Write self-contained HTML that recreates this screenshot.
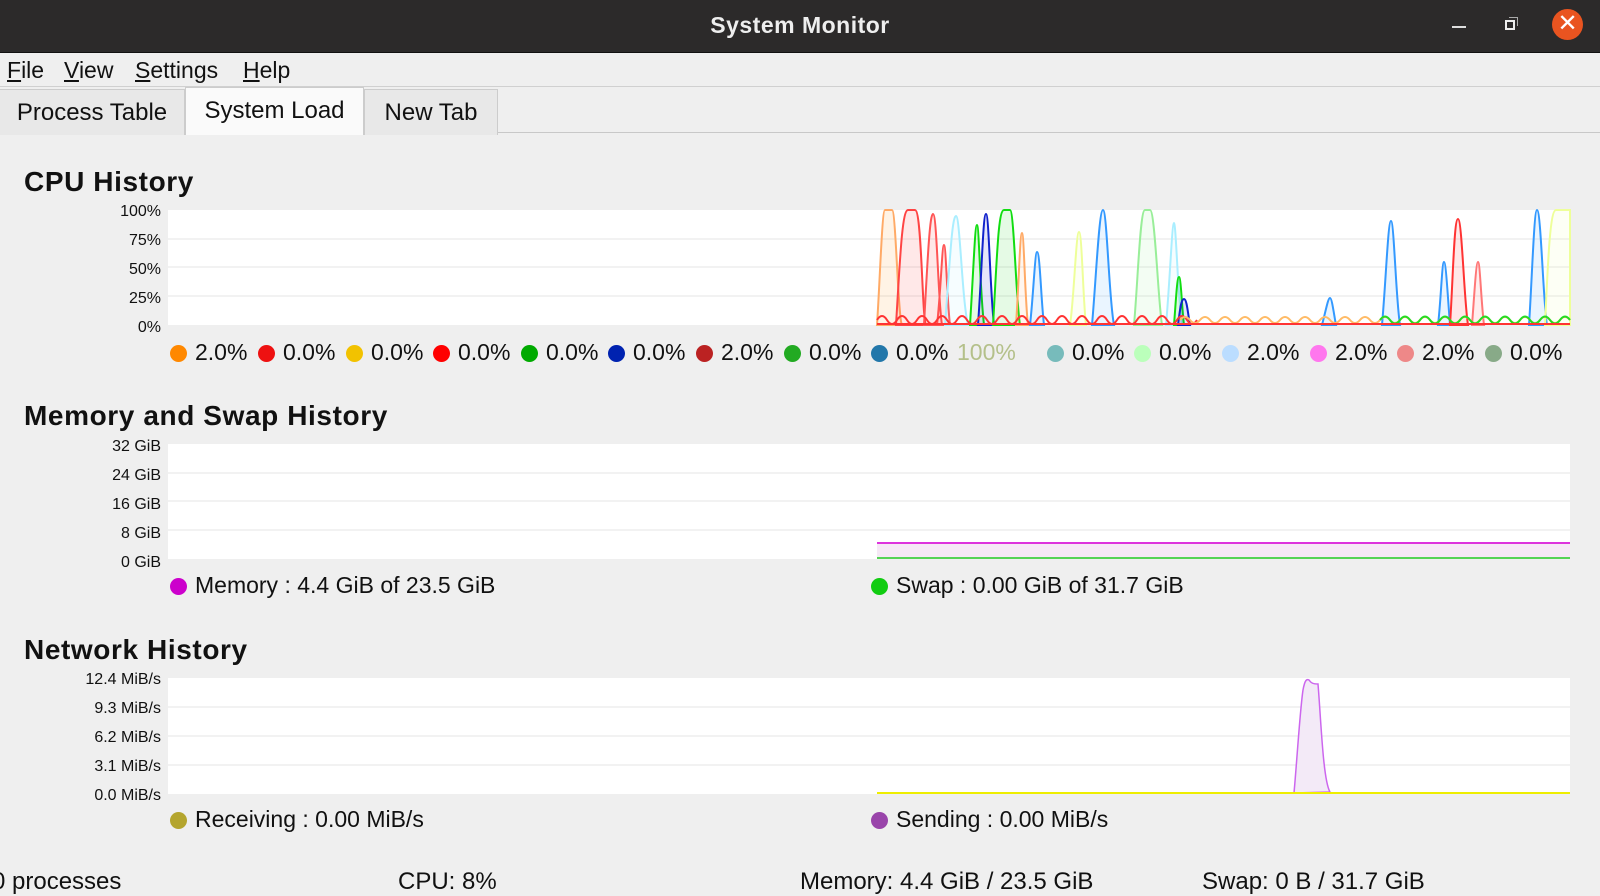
<!DOCTYPE html>
<html><head><meta charset="utf-8"><style>
*{margin:0;padding:0;box-sizing:border-box}
body{width:1600px;height:895px;overflow:hidden;background:#efefef;font-family:"Liberation Sans",sans-serif;color:#111;position:relative}
.a{position:absolute;white-space:nowrap}
#tb{left:0;top:0;width:1600px;height:53px;background:#2c2a2a;border-bottom:1px solid #111}
#title{left:0;width:1600px;top:12px;text-align:center;color:#eee;font-weight:bold;font-size:23px;letter-spacing:0.5px}
.menu{top:57px;font-size:23px}
.menu u{text-decoration:underline}
.tab{top:89px;height:46px;font-size:24px;padding:9px 0 0;text-align:center;border:1px solid #ccc;border-bottom:none;background:#e8e8e8}
h2{position:absolute;font-size:28px;font-weight:bold;left:24px;letter-spacing:0.6px}
.yl{position:absolute;right:1439px;font-size:16px;text-align:right;margin-top:2px}
.lg{position:absolute;font-size:23px}
.dot{position:absolute;width:17px;height:17px;border-radius:50%}
.st{position:absolute;top:868px;font-size:24px}
</style></head><body>
<div id="tb" class="a"></div>
<div id="title" class="a">System Monitor</div>
<div class="a" style="left:1452px;top:26px;width:14px;height:2px;background:#ddd"></div>
<div class="a" style="left:1505px;top:20px;width:10px;height:10px;border:2px solid #eee"></div>
<div class="a" style="left:1509px;top:17px;width:9px;height:9px;border-top:1px solid #aaa;border-right:1px solid #aaa"></div>
<div class="a" style="left:1552px;top:9px;width:31px;height:31px;border-radius:50%;background:#e95420;color:#fff;font-size:24px;text-align:center;line-height:30px">✕</div>
<div class="a menu" style="left:7px"><u>F</u>ile</div>
<div class="a menu" style="left:64px"><u>V</u>iew</div>
<div class="a menu" style="left:135px"><u>S</u>ettings</div>
<div class="a menu" style="left:243px"><u>H</u>elp</div>
<div class="a" style="left:0;top:86px;width:1600px;height:1px;background:#d0d0d0"></div>
<div class="a" style="left:0;top:132px;width:1600px;height:1px;background:#c8c8c8"></div>
<div class="a tab" style="left:0;width:185px;border-left:none">Process Table</div>
<div class="a tab" style="left:185px;width:179px;background:#fafafa;top:87px;height:48px">System Load</div>
<div class="a tab" style="left:364px;width:134px">New Tab</div>

<h2 style="top:166px">CPU History</h2>
<h2 style="top:400px">Memory and Swap History</h2>
<h2 style="top:634px">Network History</h2>

<div class="yl" style="top:201px">100%</div><div class="yl" style="top:230px">75%</div><div class="yl" style="top:259px">50%</div><div class="yl" style="top:288px">25%</div><div class="yl" style="top:317px">0%</div>
<div class="yl" style="top:436px">32 GiB</div><div class="yl" style="top:465px">24 GiB</div><div class="yl" style="top:494px">16 GiB</div><div class="yl" style="top:523px">8 GiB</div><div class="yl" style="top:552px">0 GiB</div>
<div class="yl" style="top:669px">12.4 MiB/s</div><div class="yl" style="top:698px">9.3 MiB/s</div><div class="yl" style="top:727px">6.2 MiB/s</div><div class="yl" style="top:756px">3.1 MiB/s</div><div class="yl" style="top:785px">0.0 MiB/s</div>

<svg class="a" style="left:0;top:0" width="1600" height="895">
<g fill="#fff"><rect x="168" y="210" width="1402" height="115"/><rect x="168" y="444" width="1402" height="115"/><rect x="168" y="678" width="1402" height="116"/></g>
<g stroke="#eee" stroke-width="1.5"><path d="M168 239H1570M168 267H1570M168 296H1570M168 473H1570M168 501H1570M168 530H1570M168 707H1570M168 736H1570M168 765H1570"/></g>
<g fill-opacity="0.1" stroke-width="2">
<path d="M877 325C880 280 882 210 885 210L892 210C896 210 898 320 902 325Z" fill="#f80" stroke="#fa6"/>
<path d="M896 325C900 260 902 210 908 210L915 210C922 210 922 320 926 325Z" fill="#f22" stroke="#f44"/>
<path d="M924 325C928 250 930 214 933 214C937 214 938 300 942 325Z" fill="#f22" stroke="#f55"/>
<path d="M937 325C941 290 942 245 944 245C946 245 947 300 950 325Z" fill="#f22" stroke="#f55"/>
<path d="M945 325C950 260 952 216 956 216C960 216 962 300 968 325Z" fill="#aef" stroke="#aef"/>
<path d="M970 325C974 260 975 225 977 225C979 225 980 290 984 325Z" fill="#0c0" stroke="#1d1"/>
<path d="M978 325C982 270 983 214 986 214C989 214 990 290 994 325Z" fill="#00c" stroke="#12c"/>
<path d="M993 325C997 260 998 210 1004 210L1010 210C1014 210 1016 300 1020 325Z" fill="#0c0" stroke="#1d1"/>
<path d="M1016 325C1019 280 1020 233 1022 233C1024 233 1025 300 1028 325Z" fill="#fa6" stroke="#fa6"/>
<path d="M1030 325C1033 300 1035 252 1037 252C1040 252 1041 300 1044 325Z" fill="#39f" stroke="#39f"/>
<path d="M1070 325C1074 300 1076 232 1079 232C1082 232 1083 300 1086 325Z" fill="#ef9" stroke="#ef9"/>
<path d="M1092 325C1096 280 1099 210 1103 210C1107 210 1109 300 1114 325Z" fill="#39f" stroke="#39f"/>
<path d="M1134 325C1138 280 1140 210 1145 210L1150 210C1155 210 1158 300 1162 325Z" fill="#8e8" stroke="#9e9"/>
<path d="M1166 325C1170 280 1172 223 1174 223C1176 223 1178 300 1182 325Z" fill="#aef" stroke="#aef"/>
<path d="M1174 325C1176 300 1177 277 1179 277C1181 277 1182 310 1184 325Z" fill="#0c0" stroke="#1d1"/>
<path d="M1178 325C1180 310 1181 299 1184 299C1187 299 1188 315 1190 325Z" fill="#00c" stroke="#12c"/>
<path d="M1322 325C1326 310 1328 298 1330 298C1332 298 1334 315 1336 325Z" fill="#39f" stroke="#39f"/>
<path d="M1382 325C1386 280 1388 221 1391 221C1394 221 1396 300 1400 325Z" fill="#39f" stroke="#39f"/>
<path d="M1438 325C1441 300 1442 262 1444 262C1446 262 1448 300 1450 325Z" fill="#39f" stroke="#39f"/>
<path d="M1450 325C1453 280 1454 219 1458 219C1462 219 1464 300 1468 325Z" fill="#f22" stroke="#f33"/>
<path d="M1472 325C1474 300 1476 262 1478 262C1480 262 1481 300 1484 325Z" fill="#f55" stroke="#f77"/>
<path d="M1529 325C1532 280 1534 210 1537 210C1541 210 1543 300 1547 325Z" fill="#39f" stroke="#39f"/>
<path d="M1545 325C1548 260 1550 210 1556 210L1570 210V325Z" fill="#ef9" stroke="#ef9"/>
</g>
<path d="M877 320q5 -8 10 0t10 0t10 0t10 0t10 0t10 0t10 0t10 0t10 0t10 0t10 0t10 0t10 0t10 0t10 0t10 0t10 0t10 0t10 0t10 0t10 0t10 0t10 0t10 0t10 0t10 0t10 0t10 0t10 0t10 0t10 0t10 0" fill="none" stroke="#f33" stroke-width="2"/>
<path d="M1180 320q5 -6 10 0t10 0t10 0t10 0t10 0t10 0t10 0t10 0t10 0t10 0t10 0t10 0t10 0t10 0t10 0t10 0t10 0t10 0t10 0t10 0t10 0t10 0t10 0t10 0t10 0t10 0t10 0t10 0t10 0t10 0t10 0t10 0t10 0t10 0t10 0t10 0t10 0t10 0t10 0" fill="none" stroke="#fb6" stroke-width="2"/>
<path d="M1380 320q5 -7 10 0t10 0t10 0t10 0t10 0t10 0t10 0t10 0t10 0t10 0t10 0t10 0t10 0t10 0t10 0t10 0t10 0t10 0t10 0" fill="none" stroke="#2d2" stroke-width="2"/>
<path d="M877 324H1570" stroke="#f33" stroke-width="2"/>
<rect x="877" y="543" width="693" height="16" fill="#f5e8f5"/>
<path d="M877 543H1570" stroke="#d3d" stroke-width="2"/>
<path d="M877 558H1570" stroke="#2c2" stroke-width="1.5"/>
<path d="M1294 793C1297 760 1300 710 1303 690C1305 679 1307 679 1309 680C1311 683 1313 684 1318 684C1321 720 1323 780 1330 792Z" fill="#f3eaf7" stroke="#c6e" stroke-width="1.5"/>
<path d="M877 793H1570" stroke="#ee0" stroke-width="2"/>
</svg>

<div class="dot" style="left:170px;top:345px;background:#f80"></div><div class="lg" style="left:195px;top:339px">2.0%</div>
<div class="dot" style="left:258px;top:345px;background:#e11"></div><div class="lg" style="left:283px;top:339px">0.0%</div>
<div class="dot" style="left:346px;top:345px;background:#f2c200"></div><div class="lg" style="left:371px;top:339px">0.0%</div>
<div class="dot" style="left:433px;top:345px;background:#f00"></div><div class="lg" style="left:458px;top:339px">0.0%</div>
<div class="dot" style="left:521px;top:345px;background:#0a0"></div><div class="lg" style="left:546px;top:339px">0.0%</div>
<div class="dot" style="left:608px;top:345px;background:#0022b0"></div><div class="lg" style="left:633px;top:339px">0.0%</div>
<div class="dot" style="left:696px;top:345px;background:#b22"></div><div class="lg" style="left:721px;top:339px">2.0%</div>
<div class="dot" style="left:784px;top:345px;background:#2a2"></div><div class="lg" style="left:809px;top:339px">0.0%</div>
<div class="dot" style="left:871px;top:345px;background:#27a"></div><div class="lg" style="left:896px;top:339px">0.0%</div>
<div class="lg" style="left:957px;top:339px;color:#b4c08a">100%</div>
<div class="dot" style="left:1047px;top:345px;background:#7bb"></div><div class="lg" style="left:1072px;top:339px">0.0%</div>
<div class="dot" style="left:1134px;top:345px;background:#bfb"></div><div class="lg" style="left:1159px;top:339px">0.0%</div>
<div class="dot" style="left:1222px;top:345px;background:#bdf"></div><div class="lg" style="left:1247px;top:339px">2.0%</div>
<div class="dot" style="left:1310px;top:345px;background:#f7e"></div><div class="lg" style="left:1335px;top:339px">2.0%</div>
<div class="dot" style="left:1397px;top:345px;background:#e88"></div><div class="lg" style="left:1422px;top:339px">2.0%</div>
<div class="dot" style="left:1485px;top:345px;background:#8a8"></div><div class="lg" style="left:1510px;top:339px">0.0%</div>

<div class="dot" style="left:170px;top:578px;background:#c0c"></div><div class="lg" style="left:195px;top:572px">Memory : 4.4 GiB of 23.5 GiB</div>
<div class="dot" style="left:871px;top:578px;background:#1c1"></div><div class="lg" style="left:896px;top:572px">Swap : 0.00 GiB of 31.7 GiB</div>
<div class="dot" style="left:170px;top:812px;background:#b4a52e"></div><div class="lg" style="left:195px;top:806px">Receiving : 0.00 MiB/s</div>
<div class="dot" style="left:871px;top:812px;background:#94a"></div><div class="lg" style="left:896px;top:806px">Sending : 0.00 MiB/s</div>

<div class="st" style="left:-8px">0 processes</div>
<div class="st" style="left:398px">CPU: 8%</div>
<div class="st" style="left:800px">Memory: 4.4 GiB / 23.5 GiB</div>
<div class="st" style="left:1202px">Swap: 0 B / 31.7 GiB</div>
</body></html>
